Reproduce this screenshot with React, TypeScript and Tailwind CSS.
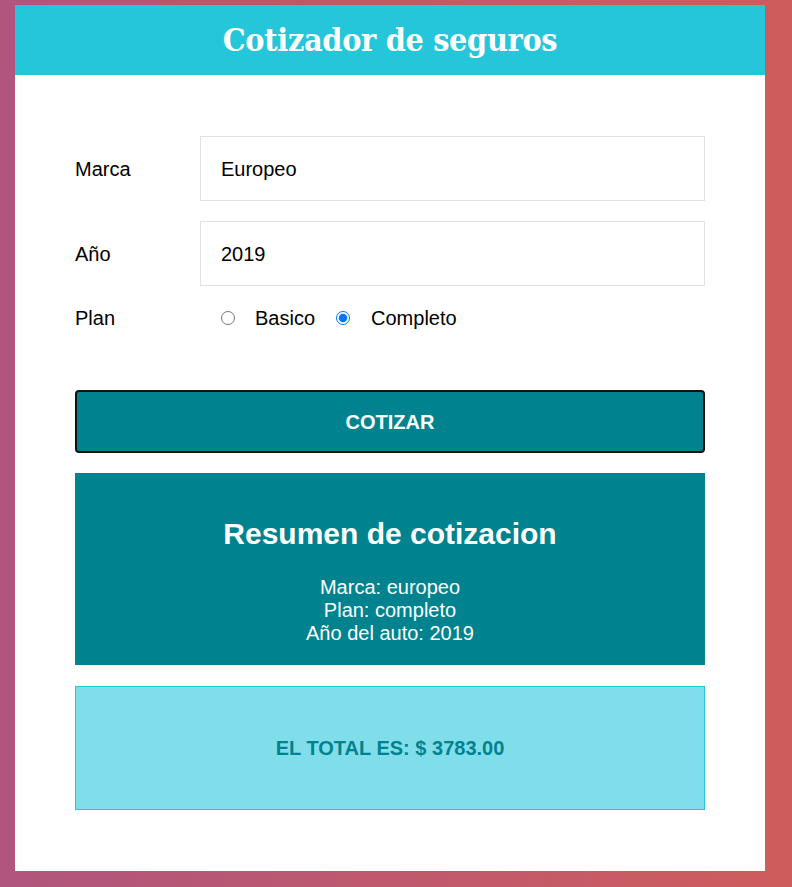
const sans = { fontFamily: '"Liberation Sans", Arial, sans-serif' };

const App: React.FC = () => {
    return (
        <div
            className="min-h-screen bg-linear-to-r from-[#b0557d] to-[#cf5c5c] pt-[5px]"
            style={sans}
        >
            <div className="ml-[15px] w-[750px] bg-white">
                <header className="h-[70px] bg-[#26c6da] flex items-center justify-center">
                    <h1
                        className="text-white text-[32px] font-bold leading-none tracking-[-0.3px]"
                        style={{ fontFamily: '"DejaVu Serif Condensed", "DejaVu Serif", serif' }}
                    >
                        Cotizador de seguros
                    </h1>
                </header>

                <div className="px-[60px] pt-[61px] pb-[61px] text-[20px] text-black">
                    <div className="flex items-center mb-[20px]">
                        <label className="w-[125px] shrink-0">Marca</label>
                        <div className="flex-1 h-[65px] border border-[#e1e1e1] px-[20px] flex items-center">
                            Europeo
                        </div>
                    </div>

                    <div className="flex items-center mb-[20px]">
                        <label className="w-[125px] shrink-0">Año</label>
                        <div className="flex-1 h-[65px] border border-[#e1e1e1] px-[20px] flex items-center">
                            2019
                        </div>
                    </div>

                    <div className="flex items-center h-[23px]">
                        <label className="w-[125px] shrink-0">Plan</label>
                        <input
                            type="radio"
                            name="plan"
                            className="w-[14px] h-[14px] m-0 ml-[21px] mr-[20px]"
                        />
                        <span className="mr-[21px]">Basico</span>
                        <input
                            type="radio"
                            name="plan"
                            defaultChecked
                            className="w-[14px] h-[14px] m-0 mr-[21px]"
                        />
                        <span>Completo</span>
                    </div>

                    <button
                        type="button"
                        className="mt-[61px] w-full h-[63px] bg-[#00838f] border-2 border-[#111] rounded-[4px] text-white font-bold text-[20px]"
                    >
                        COTIZAR
                    </button>

                    <div className="mt-[20px] bg-[#00838f] text-white text-center pt-[44px] pb-[20px]">
                        <h2 className="text-[30px] font-bold leading-[34px] mb-[25px]">
                            Resumen de cotizacion
                        </h2>
                        <p className="leading-[23px]">Marca: europeo</p>
                        <p className="leading-[23px]">Plan: completo</p>
                        <p className="leading-[23px]">Año del auto: 2019</p>
                    </div>

                    <div className="mt-[21px] h-[124px] bg-[#80deea] border border-[#26c6da] flex items-center justify-center">
                        <p className="text-[#00838f] font-bold text-[20px]">
                            EL TOTAL ES: $ 3783.00
                        </p>
                    </div>
                </div>
            </div>
        </div>
    );
};

export default App;
